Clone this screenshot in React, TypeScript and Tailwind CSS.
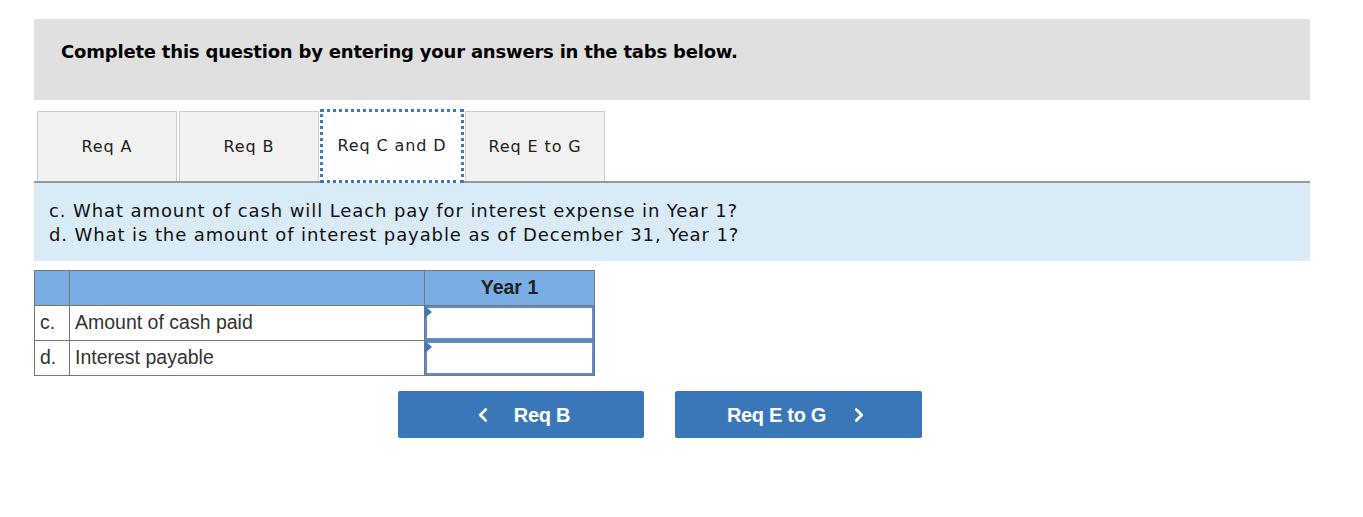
import { ChevronLeft, ChevronRight } from "lucide-react";

const tabs = ["Req A", "Req B", "Req C and D", "Req E to G"];

const rows = [
  { key: "c.", label: "Amount of cash paid" },
  { key: "d.", label: "Interest payable" },
];

export default function App() {
  return (
    <div className="min-h-screen bg-white pt-[19px] pl-[34px] pr-[53px]">
      {/* Instructions banner */}
      <div className="h-[81px] bg-[#e0e0e0] pl-[27px] pt-[21px]">
        <h2 className="font-['DejaVu_Sans',Verdana,sans-serif] font-bold text-[18px] leading-[24px] text-black tracking-[-0.2px]">
          Complete this question by entering your answers in the tabs below.
        </h2>
      </div>

      {/* Tabs */}
      <div className="mt-[9px] flex items-end border-b-2 border-[#999] pl-[3px]">
        {tabs.map((t) => {
          const active = t === "Req C and D";
          return (
            <div
              key={t}
              className={
                active
                  ? "relative -mb-[2px] -ml-[1px] h-[74px] w-[144px] bg-white border-[3px] border-dotted border-[#3b78c4] flex items-center justify-center mr-[1px]"
                  : "h-[70px] w-[140px] bg-[#f2f2f2] border border-[#cccccc] border-b-0 flex items-center justify-center mr-[2px]"
              }
            >
              <span className="font-['DejaVu_Sans',Verdana,sans-serif] text-[16px] tracking-[0.9px] text-[#222]">
                {t}
              </span>
            </div>
          );
        })}
      </div>

      {/* Question text */}
      <div className="h-[78px] bg-[#daebf8] pl-[15px] pt-[16px] font-['DejaVu_Sans',Verdana,sans-serif] text-[18px] leading-[24px] tracking-[0.9px] text-[#111]">
        <p>c. What amount of cash will Leach pay for interest expense in Year 1?</p>
        <p>d. What is the amount of interest payable as of December 31, Year 1?</p>
      </div>

      {/* Answer table */}
      <table className="mt-[9px] border-collapse font-['Liberation_Sans',Arial,sans-serif] text-[19.5px] text-[#333]">
        <thead>
          <tr className="h-[35px] bg-[#7aade4]">
            <th className="w-[35px] border border-[#777]"></th>
            <th className="w-[355px] border border-[#777]"></th>
            <th className="w-[170px] border border-[#777] font-bold text-[#222] text-center">Year 1</th>
          </tr>
        </thead>
        <tbody>
          {rows.map((r) => (
            <tr key={r.key} className="h-[35px]">
              <td className="border border-[#777] pl-[5px] text-left">{r.key}</td>
              <td className="border border-[#777] pl-[5px] text-left">{r.label}</td>
              <td className="border border-[#777] p-0">
                <div className="relative h-[34px] border-2 border-[#5b8ccc] bg-white">
                  <span className="absolute -left-[2px] -top-[2px] w-0 h-0 border-t-[6px] border-b-[6px] border-l-[7px] border-t-transparent border-b-transparent border-l-[#3b78c4]"></span>
                </div>
              </td>
            </tr>
          ))}
        </tbody>
      </table>

      {/* Navigation */}
      <div className="mt-[15px] ml-[364px] flex gap-[31px] font-['Liberation_Sans',Arial,sans-serif] text-[20px] font-bold text-white">
        <button className="h-[47px] w-[246px] rounded-[2px] bg-[#3a77b9] flex items-center justify-center gap-[20px] tracking-[-0.3px]">
          <ChevronLeft size={22} strokeWidth={3} />
          Req B
        </button>
        <button className="h-[47px] w-[247px] rounded-[2px] bg-[#3a77b9] flex items-center justify-center gap-[22px] tracking-[-0.3px]">
          Req E to G
          <ChevronRight size={22} strokeWidth={3} />
        </button>
      </div>
    </div>
  );
}
